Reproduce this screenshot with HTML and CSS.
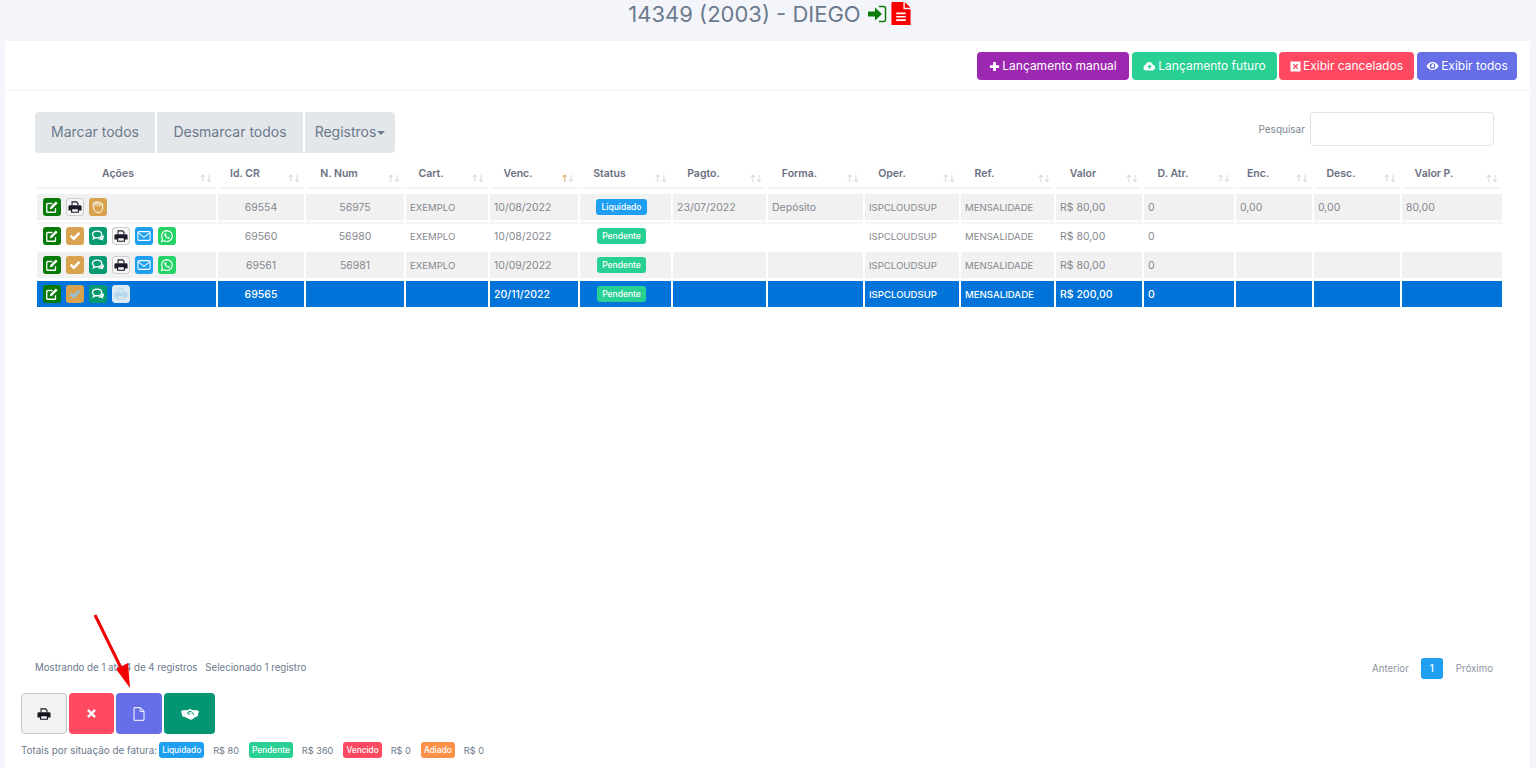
FILE: index.html
```html
<!DOCTYPE html>
<html lang="pt-BR">
<head>
<meta charset="utf-8">
<title>14349 (2003) - DIEGO</title>
<link rel="stylesheet" href="styles.css">
</head>
<body>
<svg class="defs" width="0" height="0" aria-hidden="true">
  <symbol id="i-edit" viewBox="0 0 16 16"><path d="M12 9.5V13a1 1 0 0 1-1 1H3a1 1 0 0 1-1-1V5a1 1 0 0 1 1-1h5.5" fill="none" stroke="currentColor" stroke-width="1.5"/><path d="M5.5 10.5l.6-2.6 6.3-6.3 2 2-6.3 6.3z" fill="currentColor"/></symbol>
  <symbol id="i-print" viewBox="0 0 16 16"><path d="M4 1.5h6l2 2V6h-1.2V4.2L9.5 2.8H5.2V6H4z" fill="currentColor"/><path d="M2.2 6h11.6A1.7 1.7 0 0 1 15.5 7.700v4.300H12.500v2.500H3.500V12H.5V7.700A1.700 1.700 0 0 1 2.200 6zM4.800 10.500v2.800h6.400v-2.800z" fill="currentColor" fill-rule="evenodd"/></symbol>
  <symbol id="i-hand" viewBox="0 0 16 16"><path d="M2.500 7.500V4.200a1.100 1.100 0 0 1 2.200 0V3a1.100 1.100 0 0 1 2.200 0v.300a1.100 1.100 0 0 1 2.200 0v.700a1.100 1.100 0 0 1 2.200 0v.900a1 1 0 0 1 2 0V9c0 3-1.800 5.300-5 5.300-2.600 0-3.800-1-4.600-3L2.500 7.500z" fill="none" stroke="currentColor" stroke-width="1.100"/><path d="M4.700 4.200v3M6.900 3.300v3.900M9.100 4v3.200M11.300 4.900v2.300" stroke="currentColor" stroke-width=".9" fill="none"/></symbol>
  <symbol id="i-check" viewBox="0 0 16 16"><path d="M2 8.500l2-2 2.600 2.600L12 3.500l2 2-7.400 7.500z" fill="currentColor"/></symbol>
  <symbol id="i-comments" viewBox="0 0 16 16"><path d="M7 2.500c3 0 5.200 1.600 5.200 3.800S10 10 7 10c-.7 0-1.300-.1-1.900-.2L2.800 11.200l.6-2C2.300 8.500 1.700 7.500 1.700 6.300 1.700 4.100 4 2.500 7 2.500z" fill="none" stroke="currentColor" stroke-width="1.500"/><path d="M13.200 6.500c1 .7 1.600 1.600 1.600 2.700 0 1-.5 1.900-1.300 2.500l.5 1.800-2.200-1.200c-1.700.3-3.300-.1-4.300-1.100 2.600 0 5.900-1.500 5.700-4.700z" fill="currentColor"/></symbol>
  <symbol id="i-mail" viewBox="0 0 16 16"><path d="M2.500 3h11A1.500 1.500 0 0 1 15 4.500v7a1.500 1.500 0 0 1-1.500 1.500h-11A1.500 1.500 0 0 1 1 11.500v-7A1.500 1.500 0 0 1 2.500 3z" fill="none" stroke="currentColor" stroke-width="1.200"/><path d="M1.500 4.500L8 9.500l6.500-5" fill="none" stroke="currentColor" stroke-width="1.200"/></symbol>
  <symbol id="i-whats" viewBox="0 0 16 16"><path d="M8 1.800a6.200 6.200 0 0 0-5.300 9.400L1.800 14.300l3.200-.8A6.200 6.200 0 1 0 8 1.800z" fill="none" stroke="currentColor" stroke-width="1.300"/><path d="M5.800 4.800c-.9.600-1 1.900-.2 3.200.9 1.500 2.300 2.800 3.800 3.100 1 .2 1.800-.3 2-1.200l-1.700-1-.8.700c-.9-.4-1.700-1.200-2.100-2.100l.7-.8-.9-1.900z" fill="currentColor"/></symbol>
  <symbol id="i-signin" viewBox="0 0 20 20"><path d="M1 7.500h7V3.500L15 10l-7 6.500v-4H1z" fill="currentColor"/><path d="M12 2.500h4.500a2 2 0 0 1 2 2v11a2 2 0 0 1-2 2H12" fill="none" stroke="currentColor" stroke-width="1.500"/></symbol>
  <symbol id="i-file" viewBox="0 0 20 24"><path d="M1 0h11.500v7.500H20V24H0V1a1 1 0 0 1 1-1z" fill="currentColor"/><path d="M14 0l6 6h-6z" fill="currentColor"/><path d="M5 11h10v1.700H5zM5 14.500h10v1.700H5zM5 18h10v1.700H5z" fill="#fff"/></symbol>
  <symbol id="i-plus" viewBox="0 0 12 12"><path d="M4.500 1h3v3.500H11v3H7.500V11h-3V7.500H1v-3h3.500z" fill="currentColor"/></symbol>
  <symbol id="i-cloud" viewBox="0 0 16 12"><path d="M4 11.500a3.500 3.500 0 0 1-.8-6.900A4.500 4.500 0 0 1 11.800 4a3.800 3.800 0 0 1 .2 7.500zM8 4L5 7.200h2v2.300h2V7.200h2z" fill="currentColor" fill-rule="evenodd"/></symbol>
  <symbol id="i-xbox" viewBox="0 0 12 12"><path d="M.5.5h11v11H.5zM4 3L3 4l2 2-2 2 1 1 2-2 2 2 1-1-2-2 2-2-1-1-2 2z" fill="currentColor" fill-rule="evenodd"/></symbol>
  <symbol id="i-eye" viewBox="0 0 16 12"><path d="M8 1c3.500 0 6.200 2.300 7.500 5-1.300 2.700-4 5-7.500 5S1.800 8.700.5 6C1.800 3.300 4.500 1 8 1zm0 1.500a3.500 3.500 0 1 0 0 7 3.500 3.500 0 0 0 0-7zM7 4a2 2 0 1 1-1 1.500c.3.200.8.100 1-.2.200-.4.200-.9 0-1.300z" fill="currentColor" fill-rule="evenodd"/></symbol>
  <symbol id="i-times" viewBox="0 0 12 12"><path d="M3 1.200L6 4.200l3-3L10.800 3l-3 3 3 3L9 10.800l-3-3-3 3L1.200 9l3-3-3-3z" fill="currentColor"/></symbol>
  <symbol id="i-page" viewBox="0 0 12 14"><path d="M1 .7h6.500L11 4.200v9.100H1zM7.200 1v3.400H11" fill="none" stroke="currentColor" stroke-width="1"/></symbol>
  <symbol id="i-shake" viewBox="0 0 18 12"><path d="M0 3l3-1 3 .3L9 1l3 1.300L15 2l3 1-1.500 5.500-1.700.3L11 11.500c-1 .4-1.800.3-2.500-.2L3.200 8.800 1.500 8.500z" fill="currentColor"/><path d="M6.500 4.500c1.500-1.300 3-1.500 4-.8l2.500 3.300M9 3.300L6.700 5.700c.8.800 1.800.6 2.600-.2" fill="none" stroke="#049672" stroke-width="1"/></symbol>
</svg>

<main class="page">
  <h1 class="title">14349 (2003) - DIEGO
    <svg class="title-icon in"><use href="#i-signin"/></svg>
    <svg class="title-icon doc"><use href="#i-file"/></svg>
  </h1>

  <section class="card">
    <header class="card-head">
      <button class="tbtn purple"><svg class="ti"><use href="#i-plus"/></svg>Lançamento manual</button>
      <button class="tbtn green"><svg class="ti wide"><use href="#i-cloud"/></svg>Lançamento futuro</button>
      <button class="tbtn red"><svg class="ti"><use href="#i-xbox"/></svg>Exibir cancelados</button>
      <button class="tbtn violet"><svg class="ti wide"><use href="#i-eye"/></svg>Exibir todos</button>
    </header>

    <div class="card-body">
      <div class="tools">
        <div class="group">
          <button class="gbtn mark">Marcar todos</button>
          <button class="gbtn unmark">Desmarcar todos</button>
          <button class="gbtn regs">Registros<span class="caret"></span></button>
        </div>
        <label class="search"><span>Pesquisar</span><input type="text"></label>
      </div>

      <table class="grid">
        <colgroup>
          <col class="c1"><col class="c2"><col class="c3"><col class="c4"><col class="c5"><col class="c6"><col class="c7"><col class="c8"><col class="c9"><col class="c10"><col class="c11"><col class="c12"><col class="c13"><col class="c14"><col class="c15">
        </colgroup>
        <thead>
          <tr>
            <th class="th-first">Ações<span class="sort">↑↓</span></th>
            <th>Id. CR<span class="sort">↑↓</span></th>
            <th>N. Num<span class="sort">↑↓</span></th>
            <th>Cart.<span class="sort">↑↓</span></th>
            <th>Venc.<span class="sort"><b>↑</b>↓</span></th>
            <th>Status<span class="sort">↑↓</span></th>
            <th>Pagto.<span class="sort">↑↓</span></th>
            <th>Forma.<span class="sort">↑↓</span></th>
            <th class="th-oper">Oper.<span class="sort">↑↓</span></th>
            <th class="th-ref">Ref.<span class="sort">↑↓</span></th>
            <th>Valor<span class="sort">↑↓</span></th>
            <th>D. Atr.<span class="sort">↑↓</span></th>
            <th>Enc.<span class="sort">↑↓</span></th>
            <th>Desc.<span class="sort">↑↓</span></th>
            <th class="th-last">Valor P.<span class="sort">↑↓</span></th>
          </tr>
        </thead>
        <tbody>
          <tr class="r1">
            <td><div class="acts"><span class="ib dgreen"><svg><use href="#i-edit"/></svg></span><span class="ib light"><svg><use href="#i-print"/></svg></span><span class="ib orange"><svg><use href="#i-hand"/></svg></span></div></td>
            <td class="ctr">69554</td><td class="ctr">56975</td><td class="up">EXEMPLO</td><td>10/08/2022</td>
            <td class="ctr st"><span class="badge blue">Liquidado</span></td>
            <td>23/07/2022</td><td>Depósito</td><td class="up">ISPCLOUDSUP</td><td class="up">MENSALIDADE</td><td>R$ 80,00</td><td>0</td><td>0,00</td><td>0,00</td><td>80,00</td>
          </tr>
          <tr class="r2">
            <td><div class="acts"><span class="ib dgreen"><svg><use href="#i-edit"/></svg></span><span class="ib orange"><svg><use href="#i-check"/></svg></span><span class="ib teal"><svg><use href="#i-comments"/></svg></span><span class="ib light"><svg><use href="#i-print"/></svg></span><span class="ib blue"><svg><use href="#i-mail"/></svg></span><span class="ib wa"><svg><use href="#i-whats"/></svg></span></div></td>
            <td class="ctr">69560</td><td class="ctr">56980</td><td class="up">EXEMPLO</td><td>10/08/2022</td>
            <td class="ctr st"><span class="badge green">Pendente</span></td>
            <td></td><td></td><td class="up">ISPCLOUDSUP</td><td class="up">MENSALIDADE</td><td>R$ 80,00</td><td>0</td><td></td><td></td><td></td>
          </tr>
          <tr class="r3">
            <td><div class="acts"><span class="ib dgreen"><svg><use href="#i-edit"/></svg></span><span class="ib orange"><svg><use href="#i-check"/></svg></span><span class="ib teal"><svg><use href="#i-comments"/></svg></span><span class="ib light"><svg><use href="#i-print"/></svg></span><span class="ib blue"><svg><use href="#i-mail"/></svg></span><span class="ib wa"><svg><use href="#i-whats"/></svg></span></div></td>
            <td class="ctr">69561</td><td class="ctr">56981</td><td class="up">EXEMPLO</td><td>10/09/2022</td>
            <td class="ctr st"><span class="badge green">Pendente</span></td>
            <td></td><td></td><td class="up">ISPCLOUDSUP</td><td class="up">MENSALIDADE</td><td>R$ 80,00</td><td>0</td><td></td><td></td><td></td>
          </tr>
          <tr class="r4">
            <td><div class="acts"><span class="ib dgreen"><svg><use href="#i-edit"/></svg></span><span class="ib orange"><svg class="sel-check"><use href="#i-check"/></svg></span><span class="ib teal"><svg><use href="#i-comments"/></svg></span><span class="ib light sel-print"><svg><use href="#i-print"/></svg></span></div></td>
            <td class="ctr">69565</td><td></td><td></td><td>20/11/2022</td>
            <td class="ctr st"><span class="badge green">Pendente</span></td>
            <td></td><td></td><td class="up">ISPCLOUDSUP</td><td class="up">MENSALIDADE</td><td>R$ 200,00</td><td>0</td><td></td><td></td><td></td>
          </tr>
        </tbody>
      </table>

      <div class="info">
        <p class="info-text"><span>Mostrando de 1 até 4 de 4 registros</span><span>Selecionado 1 registro</span></p>
        <nav class="pager"><span>Anterior</span><b class="current">1</b><span class="next">Próximo</span></nav>
      </div>
    </div>

    <div class="actions">
      <button class="abtn a-print"><svg><use href="#i-print"/></svg></button>
      <button class="abtn a-red"><svg class="small"><use href="#i-times"/></svg></button>
      <button class="abtn a-violet"><svg><use href="#i-page"/></svg></button>
      <button class="abtn a-teal"><svg class="shake"><use href="#i-shake"/></svg></button>
    </div>

    <div class="totals">
      <span class="tl">Totais por situação de fatura:</span>
      <span class="badge blue">Liquidado</span><span class="tv">R$ 80</span>
      <span class="badge green">Pendente</span><span class="tv">R$ 360</span>
      <span class="badge red">Vencido</span><span class="tv">R$ 0</span>
      <span class="badge amber">Adiado</span><span class="tv">R$ 0</span>
    </div>
  </section>
</main>

<svg class="arrow" viewBox="0 0 60 90" aria-hidden="true">
  <path d="M4 2L31 57" stroke="#f00000" stroke-width="3" fill="none"/>
  <path d="M39 75L25 56 37 50z" fill="#f00000"/>
</svg>
</body>
</html>
```

FILE: styles.css
```css
* { box-sizing: border-box; }
html, body { margin: 0; height: 100%; }
body {
  background: #f4f5fa;
  font-family: Inter, "Liberation Sans", sans-serif;
  color: #6b6f82;
  overflow: hidden;
  position: relative;
}
.defs { position: absolute; }
.page { height: 768px; display: flex; flex-direction: column; padding: 0 6px 0 5px; }
.title {
  margin: 0;
  height: 41px;
  padding: 0 0 0 4px;
  display: flex;
  justify-content: center;
  align-items: flex-start;
  gap: 3px;
  font-size: 22px;
  line-height: 28px;
  font-weight: 400;
  color: #6b7a8d;
  white-space: nowrap;
}
.title-icon { display: block; }
.title-icon.in { width: 20px; height: 20px; color: #0a7d0a; margin-top: 4px; margin-left: 3px; }
.title-icon.doc { width: 20px; height: 23px; color: #f80000; margin-top: 2px; margin-left: 1px; }

.card { flex: 1; background: #fff; display: flex; flex-direction: column; min-height: 0; }
.card-head {
  height: 50px;
  display: flex;
  justify-content: flex-end;
  align-items: flex-start;
  gap: 3px;
  padding: 11px 13px 0 0;
  border-bottom: 1px solid #f2f3f7;
}
.tbtn {
  height: 28px;
  border: 1px solid transparent;
  border-radius: 4px;
  color: #fff;
  font: 400 12px/1 Inter, "Liberation Sans", sans-serif;
  display: flex;
  align-items: center;
  justify-content: center;
  gap: 2px;
  padding: 0;
}
.tbtn.purple { width: 152px; background: #9c27b0; }
.tbtn.green { width: 145px; background: #28d094; }
.tbtn.red { width: 135px; background: #ff4961; margin-left: -1px; }
.tbtn.violet { width: 100px; background: #666ee8; }
.ti { width: 11px; height: 11px; color: #fff; }
.ti.wide { width: 13px; height: 10px; }

.card-body { flex: 1; display: flex; flex-direction: column; padding: 21px 36px 0 30px; min-height: 0; }
.tools { display: flex; justify-content: space-between; height: 41px; flex: none; }
.group { display: flex; gap: 2px; height: 41px; }
.gbtn {
  height: 41px;
  border: 0;
  padding: 0 0 1px;
  background: #e4e7ea;
  color: #6b7a8d;
  font: 400 14px/1 Inter, "Liberation Sans", sans-serif;
}
.mark { width: 120px; border-radius: 4px 0 0 4px; }
.unmark { width: 146px; }
.regs { width: 90px; border-radius: 0 4px 4px 0; }
.caret {
  display: inline-block;
  border: 4px solid transparent;
  border-top-color: #6b7a8d;
  border-bottom: 0;
  margin-left: 1px;
  vertical-align: 2px;
}
.search { display: flex; gap: 5px; height: 34px; align-items: center; font-size: 10px; color: #7b8794; }
.search input { width: 184px; height: 34px; border: 1px solid #dfe3e8; border-radius: 4px; background: #fff; }

.grid {
  table-layout: fixed;
  border-collapse: separate;
  border-spacing: 2px;
  width: 1469px;
  margin-top: 5px;
  flex: none;
}
.c1 { width: 179px; } .c2 { width: 86px; } .c3 { width: 98px; } .c4 { width: 82px; } .c5 { width: 88px; }
.c6 { width: 91px; } .c7 { width: 93px; } .c8 { width: 95px; } .c9 { width: 94px; } .c10 { width: 93px; }
.c11 { width: 86px; } .c12 { width: 90px; } .c13 { width: 76px; } .c14 { width: 86px; } .c15 { width: 100px; }
.grid th {
  position: relative;
  height: 32px;
  padding: 0 32px 6px 0;
  font-size: 10.5px;
  font-weight: 600;
  text-align: center;
  color: #6b6f82;
  white-space: nowrap;
  background: linear-gradient(#f3f4f6, #f3f4f6) no-repeat left bottom 3px / 100% 2px;
}
.grid th.th-first { padding-right: 17px; }
.grid th.th-oper { padding-right: 40px; }
.grid th.th-ref { padding-right: 46px; }
.grid th.th-last { padding-right: 36px; }
.sort {
  position: absolute;
  right: 5px;
  top: 14px;
  font: 400 10px/1 "DejaVu Sans", sans-serif;
  letter-spacing: -2px;
  color: #d4d7dc;
}
.sort b { font-weight: 400; color: #d8a356; }
.grid td {
  padding: 0 0 0 4px;
  height: 26px;
  font-size: 10.5px;
  color: #85888e;
  white-space: nowrap;
  overflow: hidden;
  background: #fff;
}
.grid td.up { font-size: 9.6px; }
.grid td.ctr { padding-left: 0; text-align: center; }
.grid td.st { padding-right: 8px; }
.r1 td, .r3 td { background: #f1f1f1; }
.grid .r2 td { height: 28px; border-top: 2px solid #f6f6f6; padding-bottom: 2px; }
.grid .r4 td { height: 27px; background: #0074d9; color: #fff; border-top: 1px solid #fff; font-weight: 500; }
.acts { display: flex; gap: 4.5px; padding-left: 1.5px; }
.ib {
  width: 18.5px;
  height: 18.5px;
  border-radius: 3px;
  display: flex;
  align-items: center;
  justify-content: center;
  color: #fff;
  flex: none;
}
.ib svg { width: 14px; height: 14px; display: block; }
.ib.dgreen { background: #067a06; }
.ib.light { background: #f5f5f5; border: 1px solid #ccc; color: #1a1a28; }
.ib.orange { background: #d9a24f; }
.ib.teal { background: #069a73; }
.ib.blue { background: #1e9ff2; }
.ib.wa { background: #25d366; }
.sel-check { color: #8cc4e8; }
.ib.sel-print { background: #dbe9f4; color: #b6d7ee; border-color: #dbe9f4; }
.badge {
  display: inline-block;
  height: 16px;
  line-height: 16px;
  padding: 0 3px;
  border-radius: 3px;
  font-size: 8.3px;
  font-weight: 500;
  color: #fff;
  white-space: nowrap;
}
.badge.blue { background: #1e9ff2; padding: 0 3px; }
.badge.green { background: #28d094; }
.badge.red { background: #ff4961; }
.badge.amber { background: #ff9149; }
.grid .badge { padding: 0 5px; font-size: 8.5px; }
.grid .badge.blue { padding: 0 6px; }

.info { margin-top: auto; display: flex; justify-content: space-between; align-items: flex-start; height: 22px; margin-bottom: 13px; font-size: 9.7px; padding-right: 1px; }
.info-text { margin: 0; display: flex; gap: 8px; color: #6b7a8d; line-height: 20px; }
.pager { display: flex; align-items: center; gap: 12px; color: #8b93a0; }
.current { width: 22px; height: 21px; border-radius: 3px; background: #1e9ff2; color: #fff; font-weight: 500; display: flex; align-items: center; justify-content: center; }
.next { margin-left: 1px; }

.actions { display: flex; gap: 2px; height: 41px; padding-left: 16px; flex: none; }
.abtn { height: 41px; border: 1px solid transparent; border-radius: 4px; padding: 0; display: flex; align-items: center; justify-content: center; color: #fff; }
.abtn svg { width: 14px; height: 14px; display: block; }
.abtn svg.small { width: 11px; height: 11px; }
.abtn svg.shake { width: 18px; height: 12px; }
.a-print { width: 46px; background: #f2f2f2; border-color: #c8c8c8; color: #15151f; }
.a-red { width: 45px; background: #ff4961; }
.a-violet { width: 46px; background: #666ee8; }
.a-teal { width: 51px; background: #049672; }

.totals { display: flex; align-items: center; height: 34px; padding: 0 0 2px 16px; flex: none; font-size: 9.9px; color: #6b7a8d; }
.tl { margin-right: 2px; }
.tv { margin: 0 10px 0 9px; font-size: 9.2px; }
.arrow { position: absolute; left: 91px; top: 613px; width: 60px; height: 90px; pointer-events: none; }
```
